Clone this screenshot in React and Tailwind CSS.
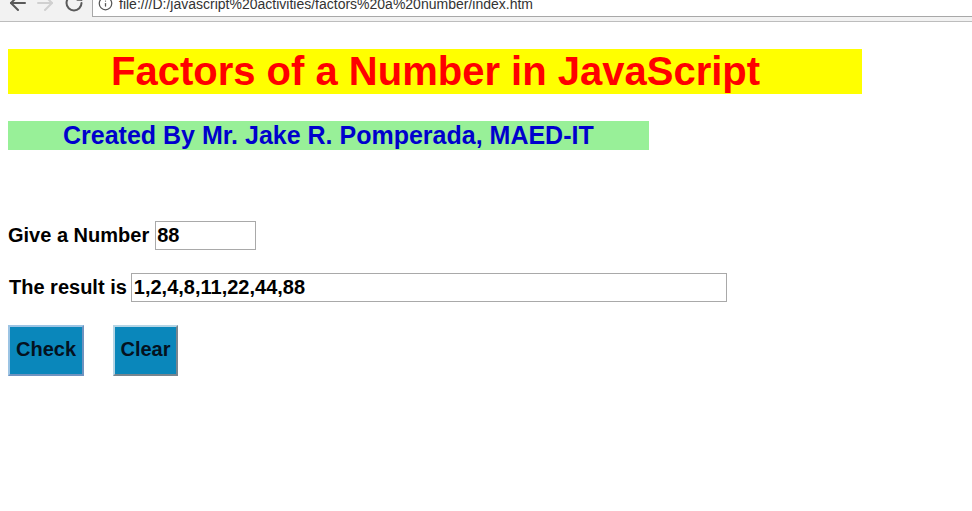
import { ArrowLeft, ArrowRight, RotateCw, Info } from "lucide-react";

const font = { fontFamily: '"Liberation Sans", Arial, sans-serif' };

export default function App() {
  return (
    <div className="w-[972px] h-[511px] overflow-hidden bg-white font-['Liberation_Sans',Arial,sans-serif] text-black">
      {/* Browser toolbar, cropped at the top of the window */}
      <div className="h-[22px] bg-[#f2f2f2] border-b border-[#bdbdbd] flex items-start">
        <div className="w-[92px] h-[6px] flex items-center pl-[6px] shrink-0">
          <ArrowLeft size={24} strokeWidth={2} className="text-[#5a5a5a] shrink-0" />
          <ArrowRight size={24} strokeWidth={2} className="text-[#d0d0d0] shrink-0 ml-[3px]" />
          <RotateCw size={20} strokeWidth={2.4} className="text-[#5a5a5a] shrink-0 ml-[7px]" />
        </div>
        <div className="flex-1 h-[17px] bg-white border-l border-b border-[#a8a8a8] flex items-start pl-[5px] gap-[6px] overflow-hidden">
          <Info size={15} strokeWidth={2} className="text-[#555] -mt-[4px] shrink-0" />
          <span className="text-[14px] leading-[16px] text-[#333] -mt-[4px] whitespace-nowrap">file:///D:/javascript%20activities/factors%20a%20number/index.htm</span>
        </div>
      </div>

      <div className="pl-2">
        <h1 className="mt-[27px] w-[854px] h-[45px] bg-[#ffff00] text-[#ff0000] text-[40px] leading-[45px] font-bold pl-[103px] whitespace-nowrap">
          Factors of a Number in JavaScript
        </h1>
        <h2 className="mt-[27px] w-[641px] h-[29px] bg-[#98f098] text-[#0000cd] text-[25px] leading-[29px] font-bold pl-[55px] whitespace-nowrap">
          Created By Mr. Jake R. Pomperada, MAED-IT
        </h2>

        <div className="mt-[71px] h-[29px] flex items-center text-[20px] font-bold">
          <label className="pb-[2px]">Give a Number</label>
          <input
            readOnly
            value="88"
            style={font}
            className="ml-[6px] w-[101px] h-[29px] border border-[#a9a9a9] px-[1px] pb-[2px] text-[20px] font-bold outline-none"
          />
        </div>

        <div className="mt-[23px] h-[29px] flex items-center text-[20px] font-bold">
          <label className="pl-[1px] pb-[2px]">The result is</label>
          <input
            readOnly
            value="1,2,4,8,11,22,44,88"
            style={font}
            className="ml-[4px] w-[596px] h-[29px] border border-[#a9a9a9] px-[2px] pb-[2px] text-[20px] font-bold outline-none"
          />
        </div>

        <div className="mt-[23px] flex gap-[29px]">
          <button className="w-[76px] h-[51px] pb-[3px] bg-[#0a87bb] border-2 border-t-[#9cc4e4] border-l-[#9cc4e4] border-r-[#6f93c0] border-b-[#6f93c0] text-[20px] font-bold text-[#04121f]">
            Check
          </button>
          <button className="w-[65px] h-[51px] pb-[3px] bg-[#0a87bb] border-2 border-t-[#b5d5e5] border-l-[#b5d5e5] border-r-[#76858f] border-b-[#76858f] text-[20px] font-bold text-[#04121f]">
            Clear
          </button>
        </div>
      </div>
    </div>
  );
}
